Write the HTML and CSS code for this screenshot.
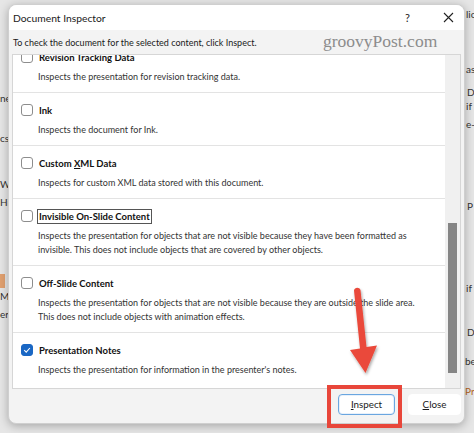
FILE: index.html
```html
<!DOCTYPE html>
<html>
<head>
<meta charset="utf-8">
<link rel="stylesheet" href="styles.css">
</head>
<body>
<div class="desk">
  <span class="frag" style="left:0;top:92px">ne</span>
  <span class="frag" style="left:0;top:132px">cs</span>
  <span class="frag" style="left:0;top:178px">Wi</span>
  <span class="frag" style="left:0;top:196px">Hi</span>
  <span class="frag" style="left:0;top:290px">Ma</span>
  <span class="frag" style="left:0;top:308px">er</span>
  <span class="frag" style="left:466px;top:8px">lic</span>
  <span class="frag" style="left:466px;top:63px">as</span>
  <span class="frag" style="left:467px;top:86px">D</span>
  <span class="frag" style="left:466px;top:100px">if</span>
  <span class="frag" style="left:466px;top:118px">e-</span>
  <span class="frag" style="left:467px;top:200px">P</span>
  <span class="frag" style="left:466px;top:282px">if</span>
  <span class="frag" style="left:467px;top:326px">D</span>
  <span class="frag" style="left:465px;top:355px">be</span>
  <span class="frag orange" style="left:465px;top:385px">Pr</span>
  <span class="orangeblock"></span>

  <div class="dialog">
    <div class="titlebar">
      <span class="title">Document Inspector</span>
      <span class="help">?</span>
      <svg class="close-x" width="11" height="11" viewBox="0 0 11 11"><path d="M1 1L10 10M10 1L1 10" stroke="#222" stroke-width="1.1" fill="none"/></svg>
    </div>
    <div class="intro">
      <span>To check the document for the selected content, click Inspect.</span>
      <span class="watermark">groovyPost.com</span>
    </div>
    <div class="list">
      <div class="items">
        <div class="row first">
          <div class="head"><span class="cb"></span><span class="name">Revision Tracking Data</span></div>
          <div class="desc">Inspects the presentation for revision tracking data.</div>
        </div>
        <div class="row">
          <div class="head"><span class="cb"></span><span class="name">Ink</span></div>
          <div class="desc">Inspects the document for Ink.</div>
        </div>
        <div class="row">
          <div class="head"><span class="cb"></span><span class="name">Custom <u>X</u>ML Data</span></div>
          <div class="desc">Inspects for custom XML data stored with this document.</div>
        </div>
        <div class="row">
          <div class="head"><span class="cb"></span><span class="name focus">Invisible On-Slide Content</span></div>
          <div class="desc">Inspects the presentation for objects that are not visible because they have been formatted as<br>invisible. This does not include objects that are covered by other objects.</div>
        </div>
        <div class="row">
          <div class="head"><span class="cb"></span><span class="name">Off-Slide Content</span></div>
          <div class="desc">Inspects the presentation for objects that are not visible because they are outside the slide area.<br>This does not include objects with animation effects.</div>
        </div>
        <div class="row last">
          <div class="head"><span class="cb checked"><svg width="12" height="12" viewBox="0 0 12 12"><path d="M3.2 6.2L5.2 8.1L8.9 4" stroke="#fff" stroke-width="1.1" fill="none"/></svg></span><span class="name">Presentation Notes</span></div>
          <div class="desc">Inspects the presentation for information in the presenter's notes.</div>
        </div>
      </div>
      <div class="scrollbar"><div class="thumb"></div></div>
    </div>
    <div class="buttons">
      <button class="btn primary"><u>I</u>nspect</button>
      <button class="btn"><u>C</u>lose</button>
    </div>
    <div class="redbox"></div>
  </div>

  <svg class="arrow" width="60" height="120" viewBox="0 0 60 120">
    <defs>
      <filter id="sh" x="-50%" y="-50%" width="200%" height="200%">
        <feDropShadow dx="1" dy="2" stdDeviation="1.6" flood-color="#000" flood-opacity="0.35"/>
      </filter>
    </defs>
    <g filter="url(#sh)">
      <path d="M11 6.5 C11.5 3 16.5 3 17.5 6 L23.5 63 L34 61.5 L22.5 89 L7 66 L17 64.5 Z" fill="#ea4a3b"/>
    </g>
  </svg>
</div>
</body>
</html>
```
FILE: styles.css
```css
html, body {
  margin: 0;
  padding: 0;
}
body {
  width: 474px;
  height: 433px;
  overflow: hidden;
  background: #e6e6e6;
  font-family: Lato, "Noto Sans", sans-serif;
}
.desk {
  position: relative;
  width: 474px;
  height: 433px;
  padding: 4px 0 0 8px;
  box-sizing: border-box;
}
.frag {
  position: absolute;
  font-size: 10px;
  color: #333;
  line-height: 12px;
}
.frag.orange { color: #b5651d; }
.orangeblock {
  position: absolute;
  left: 0;
  top: 274px;
  width: 5px;
  height: 14px;
  background: #e0a070;
}
.dialog {
  position: relative;
  width: 457px;
  height: 420px;
  background: #f3f3f3;
  border: 1px solid #cfcfcf;
  border-radius: 8px;
  box-sizing: border-box;
  box-shadow: 0 2px 10px rgba(0,0,0,0.28);
  display: flex;
  flex-direction: column;
}
.titlebar {
  height: 25px;
  background: #ffffff;
  border-radius: 8px 8px 0 0;
  display: flex;
  align-items: center;
  padding-left: 4px;
  font-size: 10.3px;
  color: #1a1a1a;
}
.title { flex: 1; }
.help {
  font-size: 11px;
  margin-right: 33px;
  color: #222;
}
.close-x { margin-right: 10px; }
.intro {
  height: 24px;
  display: flex;
  align-items: center;
  padding-left: 4px;
  font-size: 9px;
  color: #1a1a1a;
  position: relative;
}
.watermark {
  position: absolute;
  left: 314px;
  top: 1px;
  font-family: "Liberation Serif", "DejaVu Serif", serif;
  font-size: 17.5px;
  color: #8c8c8c;
}
.list {
  margin: 0 3px 0 3px;
  height: 335px;
  border: 1px solid #d6d6d6;
  background: #ffffff;
  box-sizing: border-box;
  display: flex;
  overflow: hidden;
}
.items {
  flex: 1;
  overflow: hidden;
}
.row {
  padding: 9px 0 8px 8px;
  border-bottom: 1px solid #e3e3e3;
}
.row.first { margin-top: -15px; }
.row.last { border-bottom: none; }
.head {
  display: flex;
  align-items: center;
  height: 16px;
  margin-bottom: 5px;
}
.cb {
  width: 10px;
  height: 10px;
  border: 1px solid #8d8d8d;
  border-radius: 3px;
  margin-right: 6px;
  background: #fff;
  flex: none;
  display: flex;
}
.cb.checked {
  background: #1a67c4;
  border-color: #1a67c4;
}
.cb.checked svg { margin: -1px; }
.name {
  font-size: 9.5px;
  font-weight: bold;
  color: #111;
  padding: 1px 1px;
  border: 1px solid transparent;
  margin-left: -2px;
}
.name.focus { border-color: #555; }
.desc {
  padding-left: 17px;
  padding-right: 4px;
  font-size: 9px;
  line-height: 14px;
  color: #333;
  white-space: nowrap;
}
.scrollbar {
  width: 15px;
  background: #f0f0f0;
  flex: none;
  position: relative;
}
.thumb {
  margin: 168px 0 0 3px;
  width: 9px;
  height: 150px;
  background: #858585;
}
.buttons {
  flex: 1;
  display: flex;
  align-items: center;
  justify-content: flex-end;
  gap: 13px;
  padding-right: 3px;
  padding-bottom: 4px;
}
.btn {
  font-family: inherit;
  font-size: 9.8px;
  color: #1a1a1a;
  height: 21px;
  border-radius: 4px;
  background: #fff;
  border: 1px solid #ffffff;
  padding: 0;
}
.btn.primary {
  width: 57px;
  border: 1px solid #6aa6e0;
  box-shadow: inset 0 0 0 1px #e8f1fb;
}
.btn:not(.primary) { width: 53px; }
.redbox {
  position: absolute;
  left: 318px;
  top: 380px;
  width: 75px;
  height: 43px;
  border: 4px solid #e8463a;
  box-sizing: border-box;
}
.arrow {
  position: absolute;
  left: 343px;
  top: 284px;
}
```
